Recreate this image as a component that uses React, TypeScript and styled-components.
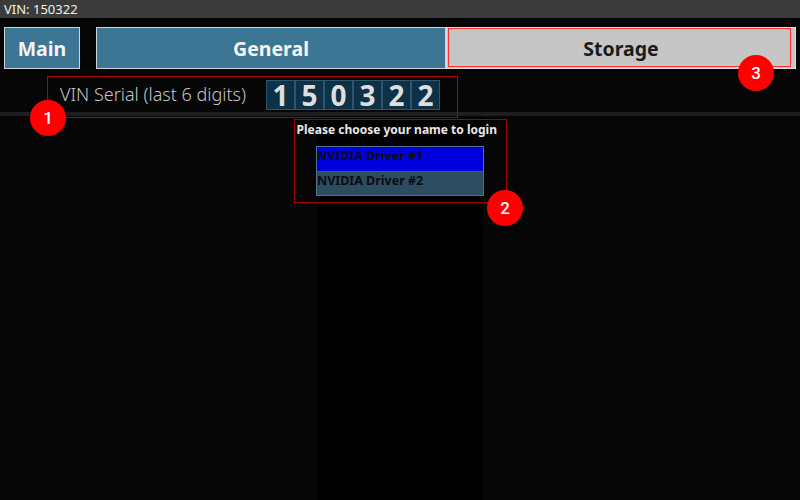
import React from "react";
import styled, { createGlobalStyle } from "styled-components";

const Global = createGlobalStyle`
  html, body { margin: 0; padding: 0; background: #060606; }
  body { font-family: "Noto Sans", "Open Sans", sans-serif; }
  * { box-sizing: border-box; }
`;

const Screen = styled.div`
  position: relative;
  width: 800px;
  height: 500px;
  overflow: hidden;
  display: flex;
  flex-direction: column;
  background: #060606;
`;

const TitleBar = styled.div`
  height: 18px;
  background: #3b3b3b;
  color: #f0f0f0;
  font-size: 13px;
  line-height: 19px;
  padding-left: 4px;
`;

const TabRow = styled.div`
  display: flex;
  padding: 9px 4px 0 4px;
  height: 51px;
`;

const Tab = styled.div<{ $active?: boolean; $width?: number; $gapAfter?: number }>`
  height: 42px;
  ${(p) => (p.$width ? `width: ${p.$width}px; flex: none;` : "flex: 1;")}
  margin-right: ${(p) => p.$gapAfter ?? 0}px;
  border: 1px solid ${(p) => (p.$active ? "#dcdcdc" : "#cfd4d8")};
  background: ${(p) => (p.$active ? "#c6c6c6" : "#3d7595")};
  color: ${(p) => (p.$active ? "#1b1b1b" : "#f4f4f4")};
  font-weight: 700;
  font-size: 19.5px;
  display: flex;
  align-items: center;
  justify-content: center;
  position: relative;
`;

const VinRow = styled.div`
  position: relative;
  display: flex;
  align-items: center;
  height: 36px;
  margin-top: 7px;
  padding-left: 60px;
  gap: 20px;
`;

const VinLabel = styled.span`
  color: #c4c4c4;
  font-size: 18px;
  font-weight: 300;
`;

const Digits = styled.div`
  display: flex;
  margin-top: 2px;
`;

const Digit = styled.div`
  width: 29px;
  height: 30px;
  background: #0d3248;
  border: 1px solid #2e566e;
  color: #dedede;
  font-weight: 700;
  font-size: 28px;
  line-height: 29px;
  display: flex;
  align-items: center;
  justify-content: center;
`;

const Separator = styled.div`
  height: 4px;
  background: #1e1e1e;
`;

const Content = styled.div`
  flex: 1;
  display: flex;
  justify-content: center;
  position: relative;
`;

const Column = styled.div`
  width: 166px;
  background: #000;
  position: absolute;
  top: 0;
  bottom: 0;
  left: 317px;
`;

const Dialog = styled.div`
  position: relative;
  margin-top: 3px;
  width: 213px;
  height: 84px;
  border: 1px solid #a00000;
  display: flex;
  flex-direction: column;
  align-items: center;
  padding-top: 2px;
`;

const DialogTitle = styled.div`
  color: #e8e8e8;
  font-weight: 700;
  font-size: 12px;
  line-height: 16px;
  align-self: flex-start;
  padding-left: 2px;
`;

const List = styled.div`
  margin-top: 8px;
  width: 168px;
  border: 1px solid #50708a;
  display: flex;
  flex-direction: column;
`;

const ListItem = styled.div<{ $selected?: boolean }>`
  height: 24px;
  background: ${(p) => (p.$selected ? "#0000de" : "#2b4d5f")};
  border-top: ${(p) => (p.$selected ? "none" : "1px solid #3a5c70")};
  color: #0c0c14;
  font-weight: 700;
  font-size: 12.5px;
  line-height: 17px;
`;

const Highlight = styled.div<{ $top: number; $left: number; $w: number; $h: number; $color?: string }>`
  position: absolute;
  top: ${(p) => p.$top}px;
  left: ${(p) => p.$left}px;
  width: ${(p) => p.$w}px;
  height: ${(p) => p.$h}px;
  border: 1px solid ${(p) => p.$color ?? "#b00000"};
  pointer-events: none;
`;

const Badge = styled.div<{ $x: number; $y: number }>`
  position: absolute;
  left: ${(p) => p.$x - 18}px;
  top: ${(p) => p.$y - 18}px;
  width: 36px;
  height: 36px;
  border-radius: 50%;
  background: #ff0000;
  color: #fff;
  font-family: "Roboto", "Noto Sans", sans-serif;
  font-size: 17px;
  font-weight: 500;
  display: flex;
  align-items: center;
  justify-content: center;
  z-index: 5;
`;

export default function App() {
  const digits = ["1", "5", "0", "3", "2", "2"];
  return (
    <Screen>
      <Global />
      <TitleBar>VIN: 150322</TitleBar>
      <TabRow>
        <Tab $width={76} $gapAfter={16}>Main</Tab>
        <Tab>General</Tab>
        <Tab $active>Storage</Tab>
      </TabRow>
      <VinRow>
        <VinLabel>VIN Serial (last 6 digits)</VinLabel>
        <Digits>
          {digits.map((d, i) => (
            <Digit key={i}>{d}</Digit>
          ))}
        </Digits>
      </VinRow>
      <Separator />
      <Content>
        <Column />
        <Dialog>
          <DialogTitle>Please choose your name to login</DialogTitle>
          <List>
            <ListItem $selected>NVIDIA Driver #1</ListItem>
            <ListItem>NVIDIA Driver #2</ListItem>
          </List>
        </Dialog>
      </Content>
      <Highlight $top={76} $left={47} $w={411} $h={42} />
      <Highlight $top={28} $left={448} $w={343} $h={39} $color="#ff3030" />
      <Badge $x={48} $y={118}>1</Badge>
      <Badge $x={505} $y={208}>2</Badge>
      <Badge $x={756} $y={73}>3</Badge>
    </Screen>
  );
}
